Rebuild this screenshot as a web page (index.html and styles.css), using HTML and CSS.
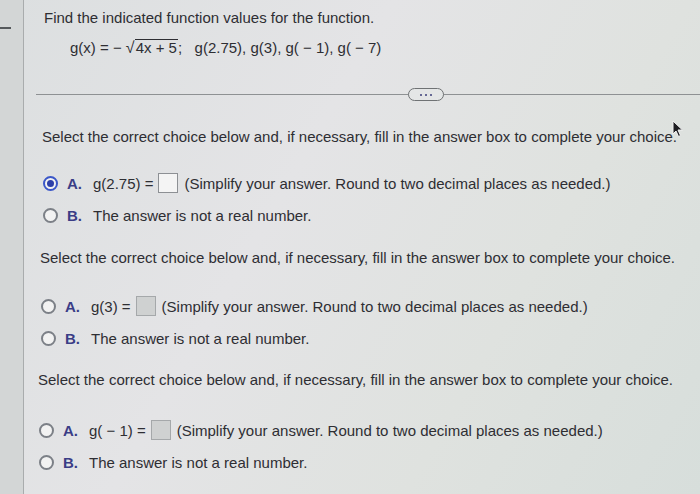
FILE: index.html
```html
<!DOCTYPE html>
<html>
<head>
<meta charset="utf-8">
<link rel="stylesheet" href="styles.css">
</head>
<body>
<div class="page">
  <div class="rail"><div class="rail-dash"></div></div>
  <div class="main">
    <div class="header">
      <p class="prompt">Find the indicated function values for the function.</p>
      <p class="formula">g(x) = &minus; <span class="root"><span class="radical">√</span><span class="radicand">4x + 5</span></span>;&nbsp;&nbsp; g(2.75), g(3), g( &minus; 1), g( &minus; 7)</p>
    </div>
    <div class="divider">
      <span class="pill"><span></span><span></span><span></span></span>
    </div>
    <div class="part part1">
      <p class="instr">Select the correct choice below and, if necessary, fill in the answer box to complete your choice.<svg class="cursor" width="12" height="18" viewBox="0 0 12 18"><path d="M1 1 L1 14 L4 11 L6.5 16.5 L8.5 15.5 L6 10 L10.5 10 Z" fill="#1e1e22" stroke="#f2f2f2" stroke-width="1"/></svg></p>
      <div class="choice">
        <span class="radio checked"></span><span class="lbl">A.</span>
        <span class="math">g(2.75) =</span><span class="box"></span><span>(Simplify your answer. Round to two decimal places as needed.)</span>
      </div>
      <div class="choice">
        <span class="radio"></span><span class="lbl">B.</span>
        <span>The answer is not a real number.</span>
      </div>
    </div>
    <div class="part part2">
      <p class="instr">Select the correct choice below and, if necessary, fill in the answer box to complete your choice.</p>
      <div class="choice">
        <span class="radio"></span><span class="lbl">A.</span>
        <span class="math">g(3) =</span><span class="box filled"></span><span>(Simplify your answer. Round to two decimal places as needed.)</span>
      </div>
      <div class="choice">
        <span class="radio"></span><span class="lbl">B.</span>
        <span>The answer is not a real number.</span>
      </div>
    </div>
    <div class="part part3">
      <p class="instr">Select the correct choice below and, if necessary, fill in the answer box to complete your choice.</p>
      <div class="choice">
        <span class="radio"></span><span class="lbl">A.</span>
        <span class="math">g( &minus; 1) =</span><span class="box filled"></span><span>(Simplify your answer. Round to two decimal places as needed.)</span>
      </div>
      <div class="choice">
        <span class="radio"></span><span class="lbl">B.</span>
        <span>The answer is not a real number.</span>
      </div>
    </div>
  </div>
</div>
</body>
</html>
```
FILE: styles.css
```css
html, body {
  margin: 0;
  padding: 0;
}
body {
  width: 700px;
  height: 494px;
  overflow: hidden;
  background: #dfe1e1;
  font-family: "Liberation Sans", Arial, sans-serif;
  color: #2e2e33;
  font-size: 15px;
}
p { margin: 0; }
.page {
  display: flex;
  height: 494px;
  background: linear-gradient(120deg, #dcdfe0 0%, #e4e4e6 40%, #dfe2df 70%, #d7dedb 100%);
}
.rail {
  width: 23px;
  flex: none;
  border-right: 1px solid #a9acad;
  background: #d3d6d6;
}
.rail-dash {
  margin-top: 27px;
  width: 11px;
  height: 2px;
  background: #55595c;
}
.main {
  flex: 1;
  display: flex;
  flex-direction: column;
}
.header {
  padding: 9px 0 0 20px;
}
.prompt {
  line-height: 18px;
}
.formula {
  margin: 12px 0 0 26px;
  line-height: 18px;
}
.root {
  display: inline-flex;
  align-items: flex-end;
}
.radical {
  font-size: 16px;
  line-height: 16px;
}
.radicand {
  border-top: 1px solid #2e2e33;
  line-height: 16px;
  padding: 0 1px;
}
.divider {
  margin: 37px 0 0 12px;
  height: 1px;
  background: #8e9193;
  position: relative;
}
.pill {
  position: absolute;
  left: 372px;
  top: -6px;
  width: 34px;
  height: 11px;
  border: 1px solid #6f7274;
  border-radius: 7px;
  background: #e4e6e6;
  display: flex;
  align-items: center;
  justify-content: center;
  gap: 3px;
}
.pill span {
  width: 2px;
  height: 2px;
  background: #3c3f7a;
  border-radius: 50%;
}
.part {
  display: flex;
  flex-direction: column;
}
.part1 { padding: 33px 0 0 18px; }
.part2 { padding: 11px 0 0 16px; }
.part3 { padding: 10px 0 0 14px; }
.instr {
  line-height: 18px;
  position: relative;
}
.cursor {
  position: absolute;
  left: 630px;
  top: -8px;
}
.part1 .instr { margin-bottom: 28px; }
.part2 .instr { margin-bottom: 30px; }
.part3 .instr { margin-bottom: 32px; }
.choice {
  display: flex;
  align-items: center;
  height: 18px;
  margin-bottom: 14px;
  padding-left: 1px;
}
.radio {
  width: 15px;
  height: 15px;
  box-sizing: border-box;
  border: 2px solid #7c8087;
  border-radius: 50%;
  background: #f2f2f2;
  margin-right: 9px;
  position: relative;
}
.radio.checked {
  border-color: #3b57c8;
}
.radio.checked::after {
  content: "";
  position: absolute;
  left: 2px;
  top: 2px;
  width: 7px;
  height: 7px;
  border-radius: 50%;
  background: #2d3fa8;
}
.lbl {
  font-weight: bold;
  color: #3a3d86;
  width: 26px;
}
.math {
  margin-right: 5px;
}
.box {
  width: 20px;
  height: 20px;
  box-sizing: border-box;
  border: 1px solid #8d9094;
  background: #f4f4f4;
  margin-right: 6px;
}
.box.filled {
  background: #cfd1d1;
  border-color: #a5a8aa;
}
```
